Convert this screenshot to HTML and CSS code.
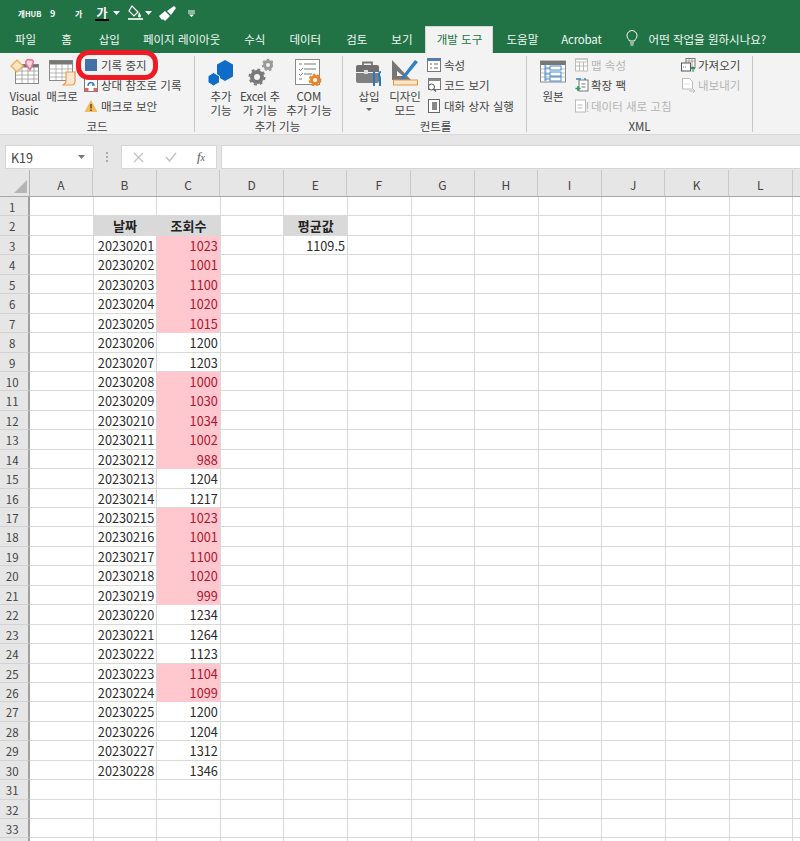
FILE: index.html
```html
<!DOCTYPE html>
<html lang="ko">
<head>
<meta charset="utf-8">
<title>Excel</title>
<link rel="stylesheet" href="styles.css">
</head>
<body>
<header class="chrome">
  <div class="qat">
    <span class="q-save">개HUB</span>
    <span class="q-comma">9</span>
    <span class="q-ga">가</span>
    <span class="q-font">가</span><svg class="caret" width="7" height="4" viewBox="0 0 7 4"><path d="M0 0h7L3.5 4z" fill="#fff"/></svg>
    <svg class="q-bucket" width="19" height="17" viewBox="0 0 19 17"><path d="M6 2l6 6-4 4-5-5z" fill="none" stroke="#fff" stroke-width="1.2"/><path d="M13 8c1 2 2 3 2 4a1.500 1.500 0 0 1-3 0z" fill="#fff"/><path d="M2 15h15" stroke="#fff" stroke-width="1.600"/></svg><svg class="caret" width="7" height="4" viewBox="0 0 7 4"><path d="M0 0h7L3.500 4z" fill="#fff"/></svg>
    <svg class="q-brush" width="20" height="17" viewBox="0 0 20 17"><path d="M1 11l6-5 5 5-5 5-2-2-1 1z" fill="#fff"/><path d="M9 6l7-5 2 2-5 7z" fill="#fff"/></svg>
    <svg class="q-more" width="7" height="7" viewBox="0 0 7 7"><path d="M0 1h7M0 3h7" stroke="#fff"/><path d="M1 4.500h5L3.500 7z" fill="#fff"/></svg>
  </div>
  <nav class="tabs">
    <span class="tab t-file">파일</span>
    <span class="tab t-home">홈</span>
    <span class="tab t-ins">삽입</span>
    <span class="tab t-page">페이지 레이아웃</span>
    <span class="tab t-form">수식</span>
    <span class="tab t-data">데이터</span>
    <span class="tab t-rev">검토</span>
    <span class="tab t-view">보기</span>
    <span class="tab active">개발 도구</span>
    <span class="tab t-help">도움말</span>
    <span class="tab t-acro">Acrobat</span>
    <svg class="bulb" width="12" height="17" viewBox="0 0 12 17"><path d="M3.500 11C3 9 1 8.500 1 5.500a5 5 0 0 1 10 0C11 8.500 9 9 8.500 11zM4 13h4M4.500 15h3" fill="none" stroke="#fff"/></svg>
    <span class="tab t-tell">어떤 작업을 원하시나요?</span>
  </nav>
</header>

<section class="ribbon">
  <div class="group g-code">
    <div class="body">
      <div class="big w-vb">
        <svg class="ico" width="30" height="30" viewBox="0 0 30 30"><rect x="5.500" y="8.500" width="23" height="19" fill="#fff" stroke="#8a8a8a"/><path d="M5.500 8.500h23v3h-23z" fill="#777"/><path d="M6 15h22M6 19h22M6 23h22M12 11v16M18 11v16M24 11v16" stroke="#9a9a9a" stroke-width=".8"/><path d="M1 10l6-6 6 6-6 6z" fill="#fbe6bd" stroke="#e9b468" stroke-width="1.500"/><path d="M16 8c-1-4 2-5 4-4 2-1 4 1 3 3-1 3-2 5-3 7z" fill="#fbd6dc" stroke="#e5738f" stroke-width="1.500"/></svg>
        <span>Visual<br>Basic</span>
      </div>
      <div class="big w-mac">
        <svg class="ico" width="30" height="30" viewBox="0 0 30 30"><rect x="2.500" y="4.500" width="23" height="20" fill="#fff" stroke="#8a8a8a"/><path d="M2.500 4.500h23v4h-23z" fill="#777"/><path d="M3 13h22M3 17h22M3 21h22M9 8v16M15 8v16M21 8v16" stroke="#a5a5a5" stroke-width=".8"/><path d="M19 16h9v9c0 2-1 4-3 4h-9c1-1 3-1 3-4z" fill="#fbe6cf" stroke="#e79a4c" stroke-width="1.200"/></svg>
        <span>매크로</span>
      </div>
      <div class="col">
        <div class="small"><svg width="14" height="14" viewBox="0 0 14 14"><rect x="1" y="1" width="12" height="12" fill="#4472a8"/></svg><span>기록 중지</span></div>
        <div class="small"><svg width="14" height="14" viewBox="0 0 14 14"><rect x=".5" y=".5" width="13" height="13" fill="#fff" stroke="#777"/><path d="M.5 10h4v3.500h-4zM9.500 10h4v3.500h-4z" fill="#e2675a"/><path d="M4 8c0-4 5-5 6-1l-2 0" fill="none" stroke="#3d79b8" stroke-width="1.400"/></svg><span>상대 참조로 기록</span></div>
        <div class="small"><svg width="14" height="14" viewBox="0 0 14 14"><path d="M7 1l6.500 12H.5z" fill="#f2bb55"/><path d="M7 5v4.500M7 10.500v1.500" stroke="#444" stroke-width="1.400"/></svg><span>매크로 보안</span></div>
      </div>
    </div>
    <div class="label">코드</div>
  </div>

  <div class="group g-addin">
    <div class="body">
      <div class="big w-add">
        <svg class="ico" width="26" height="30" viewBox="0 0 26 30"><path d="M17 4l8 4.500v12L17 25l-8-4.500v-12z" fill="#0f6cc8"/><path d="M5.500 16.500l6 3.500v6.500l-6 3.500-5.500-3.500V20z" fill="#0f6cc8" stroke="#f3f3f3"/></svg>
        <span>추가<br>기능</span>
      </div>
      <div class="big w-xl">
        <svg class="ico" width="26" height="30" viewBox="0 0 26 30"><circle cx="10" cy="21" r="5" fill="none" stroke="#7a7a7a" stroke-width="4"/><circle cx="10" cy="21" r="7.500" fill="none" stroke="#7a7a7a" stroke-width="2" stroke-dasharray="3 2.900"/><circle cx="21" cy="9" r="3.500" fill="none" stroke="#9a9a9a" stroke-width="3"/><circle cx="21" cy="9" r="5.500" fill="none" stroke="#9a9a9a" stroke-width="1.500" stroke-dasharray="2.500 2.300"/></svg>
        <span>Excel 추<br>가 기능</span>
      </div>
      <div class="big w-com">
        <svg class="ico" width="28" height="30" viewBox="0 0 28 30"><rect x=".5" y="3.500" width="24" height="25" fill="#fff" stroke="#8a8a8a"/><path d="M4 8h3M9 8h12M4 13l1.500 1.500L8 12M9 13h12M4 18l1.500 1.500L8 17M9 18h8M4 23h3" stroke="#777" fill="none"/><circle cx="20" cy="24" r="3.500" fill="none" stroke="#e8862e" stroke-width="3"/><circle cx="20" cy="24" r="5.500" fill="none" stroke="#e8862e" stroke-width="1.800" stroke-dasharray="2.600 2"/></svg>
        <span>COM<br>추가 기능</span>
      </div>
    </div>
    <div class="label l-addin">추가 기능</div>
  </div>

  <div class="group g-ctrl">
    <div class="body">
      <div class="big w-ins">
        <svg class="ico" width="28" height="30" viewBox="0 0 28 30"><path d="M8 9V6.500h9V9" fill="none" stroke="#777" stroke-width="1.800"/><path d="M1 11a2 2 0 0 1 2-2h19a2 2 0 0 1 2 2v5H1z" fill="#6f6f6f"/><path d="M1 17h23v8a2 2 0 0 1-2 2H3a2 2 0 0 1-2-2z" fill="#808080"/><rect x="9" y="14" width="4" height="4" fill="#ddd"/><path d="M19 16v14M26 16c-2 0-2 1-2 3 0 1 1 2 1 3v8" stroke="#1f78c8" stroke-width="2" fill="none"/></svg>
        <span>삽입</span>
        <svg class="down" width="6" height="3" viewBox="0 0 6 3"><path d="M0 0h6L3 3z" fill="#666"/></svg>
      </div>
      <div class="big w-des">
        <svg class="ico" width="30" height="30" viewBox="0 0 30 30"><path d="M2 4v20h19z" fill="#777"/><path d="M7 15v5h6z" fill="#f3f3f3"/><path d="M11 22L25 4l3 2-14 17-4 1z" fill="#2e7fc9"/><rect x="3.500" y="24" width="24" height="5" fill="#fde7c8" stroke="#e9953f"/></svg>
        <span>디자인<br>모드</span>
      </div>
      <div class="col">
        <div class="small"><svg width="14" height="14" viewBox="0 0 14 14"><rect x=".5" y=".5" width="13" height="13" fill="#fff" stroke="#777"/><path d="M.5.500h13v2.500H.5z" fill="#4a7fb8"/><path d="M3 6h2M7 6h4M3 10h2M7 10h4" stroke="#666"/></svg><span>속성</span></div>
        <div class="small"><svg width="14" height="14" viewBox="0 0 14 14"><rect x="1.500" y=".5" width="12" height="11" fill="#fff" stroke="#777"/><path d="M1.500.500h12V3h-12z" fill="#888"/><circle cx="4.500" cy="9" r="3" fill="#fff" stroke="#555"/><path d="M6.500 11l2.500 2.500" stroke="#555" stroke-width="1.300"/></svg><span>코드 보기</span></div>
        <div class="small"><svg width="14" height="14" viewBox="0 0 14 14"><rect x="1.500" y=".5" width="11" height="13" fill="#fff" stroke="#666"/><rect x="5" y="3" width="5" height="8" fill="#888"/></svg><span>대화 상자 실행</span></div>
      </div>
    </div>
    <div class="label l-ctrl">컨트롤</div>
  </div>

  <div class="group g-xml">
    <div class="body">
      <div class="big w-src">
        <svg class="ico" width="26" height="30" viewBox="0 0 26 30"><rect x=".5" y="5" width="25" height="21" fill="#fff" stroke="#8a8a8a"/><path d="M.5 5h25v4H.5z" fill="#777"/><path d="M1 13h24M1 17h24M1 21h24M6 9v17" stroke="#aaa" stroke-width=".8"/><path d="M5 9v16M5 12h5M5 18h5M5 23h5" stroke="#4a8ac8" fill="none"/><rect x="10" y="10" width="11" height="4" fill="#fff" stroke="#4a8ac8"/><rect x="10" y="16" width="11" height="4" fill="#fff" stroke="#4a8ac8"/><rect x="10" y="21" width="11" height="4" fill="#fff" stroke="#4a8ac8"/></svg>
        <span>원본</span>
      </div>
      <div class="col c-xml1">
        <div class="small dim"><svg width="14" height="14" viewBox="0 0 14 14"><rect x=".5" y="1" width="12" height="12" fill="#fff" stroke="#bbb"/><path d="M.5 1h12v3H.5zM4.500 4v9M8.500 4v9M.5 8h12" stroke="#bbb" fill="none"/></svg><span>맵 속성</span></div>
        <div class="small"><svg width="14" height="14" viewBox="0 0 14 14"><rect x="4" y="2" width="9" height="11" fill="#fff" stroke="#777"/><path d="M1 1h5M9 1h2" stroke="#3a85c8" stroke-width="1.500"/><path d="M3 8v5M.5 10.500h5" stroke="#2e9a55" stroke-width="1.600"/><path d="M6.500 6h4M6.500 9h4" stroke="#777"/></svg><span>확장 팩</span></div>
        <div class="small dim"><svg width="14" height="14" viewBox="0 0 14 14"><rect x=".5" y="1" width="10" height="12" fill="#fff" stroke="#bbb"/><path d="M2.500 6h5M2.500 9h5" stroke="#bbb"/><path d="M12.500 3v7M12.500 11.500v1.500" stroke="#bbb" stroke-width="1.300"/></svg><span>데이터 새로 고침</span></div>
      </div>
      <div class="col c-xml2">
        <div class="small"><svg width="15" height="15" viewBox="0 0 15 15"><rect x="5" y=".5" width="9" height="9" fill="#fff" stroke="#777"/><path d="M5 3h9M8 .5v9M11 .5v9" stroke="#888" stroke-width=".7"/><rect x=".5" y="5" width="9" height="8" fill="#fff" stroke="#555"/><path d="M2 9h4" stroke="#3a85c8" stroke-dasharray="1 1"/><path d="M12 14V9M10 11l2-2 2 2" stroke="#2e9a55" fill="none" stroke-width="1.200"/></svg><span>가져오기</span></div>
        <div class="small dim"><svg width="15" height="15" viewBox="0 0 15 15"><path d="M1.500.500h7l3 3V11h-10z" fill="#fff" stroke="#bbb"/><path d="M3.500 6h5" stroke="#bbb" stroke-dasharray="1 1"/><path d="M8 13h6M12 11l2 2-2 2" stroke="#bbb" fill="none"/></svg><span>내보내기</span></div>
      </div>
    </div>
    <div class="label l-xml">XML</div>
  </div>

  <div class="ring"></div>
</section>

<section class="formula">
  <div class="namebox"><span>K19</span><svg width="7" height="4" viewBox="0 0 7 4"><path d="M0 0h7L3.500 4z" fill="#777"/></svg></div>
  <div class="dots"></div>
  <div class="fx">
    <svg width="11" height="11" viewBox="0 0 11 11"><path d="M1 1l9 9M10 1l-9 9" stroke="#c4c4c4" stroke-width="1.400"/></svg>
    <svg width="12" height="10" viewBox="0 0 12 10"><path d="M1 5l3.500 4L11 1" stroke="#c4c4c4" stroke-width="1.500" fill="none"/></svg>
    <span class="fx-t">f<i>x</i></span>
  </div>
  <div class="input"></div>
</section>

<main class="sheet">
  <div class="colhead">
    <div class="corner"><svg width="13" height="13" viewBox="0 0 13 13"><path d="M13 0v13H0z" fill="#b5b5b5"/></svg></div>
    <div class="ch">A</div><div class="ch">B</div><div class="ch">C</div><div class="ch">D</div><div class="ch">E</div><div class="ch">F</div><div class="ch">G</div><div class="ch">H</div><div class="ch">I</div><div class="ch">J</div><div class="ch">K</div><div class="ch">L</div>
  </div>
  <div class="row"><div class="rh">1</div><div class="cells"></div></div>
  <div class="row"><div class="rh">2</div><div class="cells"><div class="cell b head">날짜</div><div class="cell c head">조회수</div><div class="cell e head">평균값</div></div></div>
  <div class="row"><div class="rh">3</div><div class="cells"><div class="cell b">20230201</div><div class="cell c low">1023</div><div class="cell e">1109.5</div></div></div>
  <div class="row"><div class="rh">4</div><div class="cells"><div class="cell b">20230202</div><div class="cell c low">1001</div></div></div>
  <div class="row"><div class="rh">5</div><div class="cells"><div class="cell b">20230203</div><div class="cell c low">1100</div></div></div>
  <div class="row"><div class="rh">6</div><div class="cells"><div class="cell b">20230204</div><div class="cell c low">1020</div></div></div>
  <div class="row"><div class="rh">7</div><div class="cells"><div class="cell b">20230205</div><div class="cell c low">1015</div></div></div>
  <div class="row"><div class="rh">8</div><div class="cells"><div class="cell b">20230206</div><div class="cell c">1200</div></div></div>
  <div class="row"><div class="rh">9</div><div class="cells"><div class="cell b">20230207</div><div class="cell c">1203</div></div></div>
  <div class="row"><div class="rh">10</div><div class="cells"><div class="cell b">20230208</div><div class="cell c low">1000</div></div></div>
  <div class="row"><div class="rh">11</div><div class="cells"><div class="cell b">20230209</div><div class="cell c low">1030</div></div></div>
  <div class="row"><div class="rh">12</div><div class="cells"><div class="cell b">20230210</div><div class="cell c low">1034</div></div></div>
  <div class="row"><div class="rh">13</div><div class="cells"><div class="cell b">20230211</div><div class="cell c low">1002</div></div></div>
  <div class="row"><div class="rh">14</div><div class="cells"><div class="cell b">20230212</div><div class="cell c low">988</div></div></div>
  <div class="row"><div class="rh">15</div><div class="cells"><div class="cell b">20230213</div><div class="cell c">1204</div></div></div>
  <div class="row"><div class="rh">16</div><div class="cells"><div class="cell b">20230214</div><div class="cell c">1217</div></div></div>
  <div class="row"><div class="rh">17</div><div class="cells"><div class="cell b">20230215</div><div class="cell c low">1023</div></div></div>
  <div class="row"><div class="rh">18</div><div class="cells"><div class="cell b">20230216</div><div class="cell c low">1001</div></div></div>
  <div class="row"><div class="rh">19</div><div class="cells"><div class="cell b">20230217</div><div class="cell c low">1100</div></div></div>
  <div class="row"><div class="rh">20</div><div class="cells"><div class="cell b">20230218</div><div class="cell c low">1020</div></div></div>
  <div class="row"><div class="rh">21</div><div class="cells"><div class="cell b">20230219</div><div class="cell c low">999</div></div></div>
  <div class="row"><div class="rh">22</div><div class="cells"><div class="cell b">20230220</div><div class="cell c">1234</div></div></div>
  <div class="row"><div class="rh">23</div><div class="cells"><div class="cell b">20230221</div><div class="cell c">1264</div></div></div>
  <div class="row"><div class="rh">24</div><div class="cells"><div class="cell b">20230222</div><div class="cell c">1123</div></div></div>
  <div class="row"><div class="rh">25</div><div class="cells"><div class="cell b">20230223</div><div class="cell c low">1104</div></div></div>
  <div class="row"><div class="rh">26</div><div class="cells"><div class="cell b">20230224</div><div class="cell c low">1099</div></div></div>
  <div class="row"><div class="rh">27</div><div class="cells"><div class="cell b">20230225</div><div class="cell c">1200</div></div></div>
  <div class="row"><div class="rh">28</div><div class="cells"><div class="cell b">20230226</div><div class="cell c">1204</div></div></div>
  <div class="row"><div class="rh">29</div><div class="cells"><div class="cell b">20230227</div><div class="cell c">1312</div></div></div>
  <div class="row"><div class="rh">30</div><div class="cells"><div class="cell b">20230228</div><div class="cell c">1346</div></div></div>
  <div class="row"><div class="rh">31</div><div class="cells"></div></div>
  <div class="row"><div class="rh">32</div><div class="cells"></div></div>
  <div class="row"><div class="rh">33</div><div class="cells"></div></div>
  <div class="row"><div class="rh"></div><div class="cells"></div></div>
</main>
</body>
</html>
```
FILE: styles.css
```css
* { box-sizing: border-box; }
html, body { margin: 0; height: 100%; overflow: hidden; }
body {
  width: 800px;
  height: 841px;
  background: #fff;
  font-family: "Noto Sans CJK KR", "Noto Sans", sans-serif;
  font-size: 11.5px;
  color: #444;
}
.chrome { height: 53px; background: #217346; color: #fff; display: flex; flex-direction: column; }
.qat { height: 26px; display: flex; align-items: center; padding-left: 18px; }
.q-save { font-size: 7.5px; font-weight: 700; width: 32px; }
.q-comma { font-size: 9px; font-weight: 700; width: 25px; }
.q-ga { font-size: 8px; font-weight: 700; width: 20px; }
.q-font { font-size: 12px; font-weight: 700; width: 14px; height: 15px; line-height: 13px; border-bottom: 2px solid #000; margin-right: 4px; text-align: center; }
.caret { margin-right: 6px; }
.q-bucket { margin-top: -1px; }
.q-brush { margin-right: 10px; }

.tabs { height: 27px; display: flex; align-items: stretch; }
.tab { font-size: 11.5px; line-height: 26px; white-space: nowrap; color: #f2f7f4; }
.t-file { margin-left: 15px; }
.t-home { margin-left: 25px; }
.t-ins { margin-left: 27px; }
.t-page { margin-left: 23px; }
.t-form { margin-left: 24px; }
.t-data { margin-left: 24px; }
.t-rev { margin-left: 25px; }
.t-view { margin-left: 24px; }
.tab.active {
  margin-left: 13px;
  width: 68px;
  text-align: center;
  background: #f3f3f3;
  color: #217346;
  border: 1px solid #d4d4d4;
  border-bottom: 0;
  line-height: 25px;
}
.t-help { margin-left: 13px; }
.t-acro { margin-left: 23px; letter-spacing: -0.2px; }
.bulb { margin-left: 24px; margin-top: 4px; }
.t-tell { margin-left: 11px; }

.ribbon {
  position: relative;
  height: 82px;
  background: #f3f3f3;
  border-bottom: 1px solid #d8d8d8;
  display: flex;
}
.group { display: flex; flex-direction: column; margin: 3px 0; border-right: 1px solid #c6c6c6; height: 76px; }
.body { flex: 1; display: flex; align-items: flex-start; }
.label { height: 12px; line-height: 12px; text-align: center; white-space: nowrap; }
.g-code { width: 195px; padding-left: 8px; }
.g-addin { width: 148px; padding-left: 13px; }
.g-ctrl { width: 184px; padding-left: 12px; }
.g-xml { width: 226px; padding-left: 12px; }
.g-code .label { padding-right: 8px; }
.l-addin { padding-left: 5px; }
.l-ctrl { padding-right: 10px; }
.l-xml { padding-right: 12px; }

.big { display: flex; flex-direction: column; align-items: center; line-height: 14px; text-align: center; flex: none; white-space: nowrap; }
.big span { margin-top: 3px; }
.ico { display: block; flex: none; }
.w-vb { width: 34px; letter-spacing: -0.15px; }
.w-mac { width: 34px; margin-left: 3px; }
.w-add { width: 26px; }
.w-xl { width: 40px; margin-left: 6px; letter-spacing: -0.15px; }
.w-com { width: 44px; margin-left: 7px; }
.w-ins { width: 28px; }
.w-des { width: 30px; margin-left: 7px; }
.w-src { width: 26px; margin-left: 1px; }
.down { margin-top: 5px; }

.col { display: flex; flex-direction: column; margin-left: 5px; margin-top: -1px; }
.g-ctrl .col { margin-left: 7px; }
.col.c-xml1 { margin-left: 9px; width: 106px; }
.col.c-xml2 { margin-left: 0; }
.small { display: flex; align-items: center; gap: 3px; height: 20.3px; white-space: nowrap; }
.c-xml1 .small, .c-xml2 .small { gap: 2px; }
.small svg { flex: none; }
.dim { color: #b4b4b4; }

.ring {
  position: absolute;
  left: 76px;
  top: -3px;
  width: 82px;
  height: 30px;
  border: 5px solid #ed1c24;
  border-radius: 13px;
}

.formula {
  height: 35px;
  background: #e6e6e6;
  display: flex;
  align-items: flex-start;
  padding-top: 10px;
  padding-left: 5px;
}
.namebox, .fx, .input { height: 24px; background: #fff; border: 1px solid #d6d6d6; }
.namebox { width: 89px; display: flex; align-items: center; justify-content: space-between; padding: 0 8px 0 5px; font-size: 12.5px; color: #444; }
.dots { width: 27px; height: 24px; display: flex; align-items: center; justify-content: center; }
.dots::before {
  content: "";
  width: 2px;
  height: 10px;
  background: repeating-linear-gradient(#aaa 0, #aaa 2px, transparent 2px, transparent 4px);
}
.fx { width: 96px; display: flex; align-items: center; gap: 21px; padding-left: 11px; }
.fx-t { font-family: "Liberation Serif", serif; font-style: italic; font-size: 13px; color: #555; margin-left: -1px; }
.fx-t i { font-size: 10px; }
.input { width: 580px; margin-left: 4px; border-right: 0; }

.sheet { display: flex; flex-direction: column; }
.colhead { height: 27px; display: flex; background: #e6e6e6; border-bottom: 1px solid #a8a8a8; }
.corner { width: 29.5px; flex: none; border-right: 1px solid #b0b0b0; display: flex; align-items: flex-end; justify-content: flex-end; padding: 0 2px 3px 0; }
.corner svg { display: block; }
.ch { width: 63.6px; flex: none; text-align: center; line-height: 30px; font-size: 12px; color: #444; border-right: 1px solid #c8c8c8; }

.row { height: 19.45px; display: flex; flex: none; }
.rh {
  width: 29.5px;
  flex: none;
  background: #e6e6e6;
  border-right: 2px solid #a0a0a0;
  border-bottom: 1px solid #d2d2d2;
  text-align: center;
  line-height: 21px;
  font-size: 11.5px;
  color: #444;
  padding-right: 3px;
}
.cells {
  flex: 1;
  display: grid;
  grid-template-columns: repeat(12, 63.6px);
  background:
    linear-gradient(#d9d9d9, #d9d9d9) left bottom / 100% 1px no-repeat,
    repeating-linear-gradient(to right, transparent 0, transparent 62.6px, #d9d9d9 62.6px, #d9d9d9 63.6px);
}
.cell { font-size: 12.7px; line-height: 19px; text-align: right; padding-right: 2.5px; color: #2a2a2a; white-space: nowrap; }
.b { grid-column: 2; }
.c { grid-column: 3; }
.e { grid-column: 5; }
.head { background: #d9d9d9; text-align: center; font-size: 13px; font-weight: 700; padding-right: 0; color: #222; }
.low { background: #ffc7ce; color: #ab1530; }
```
